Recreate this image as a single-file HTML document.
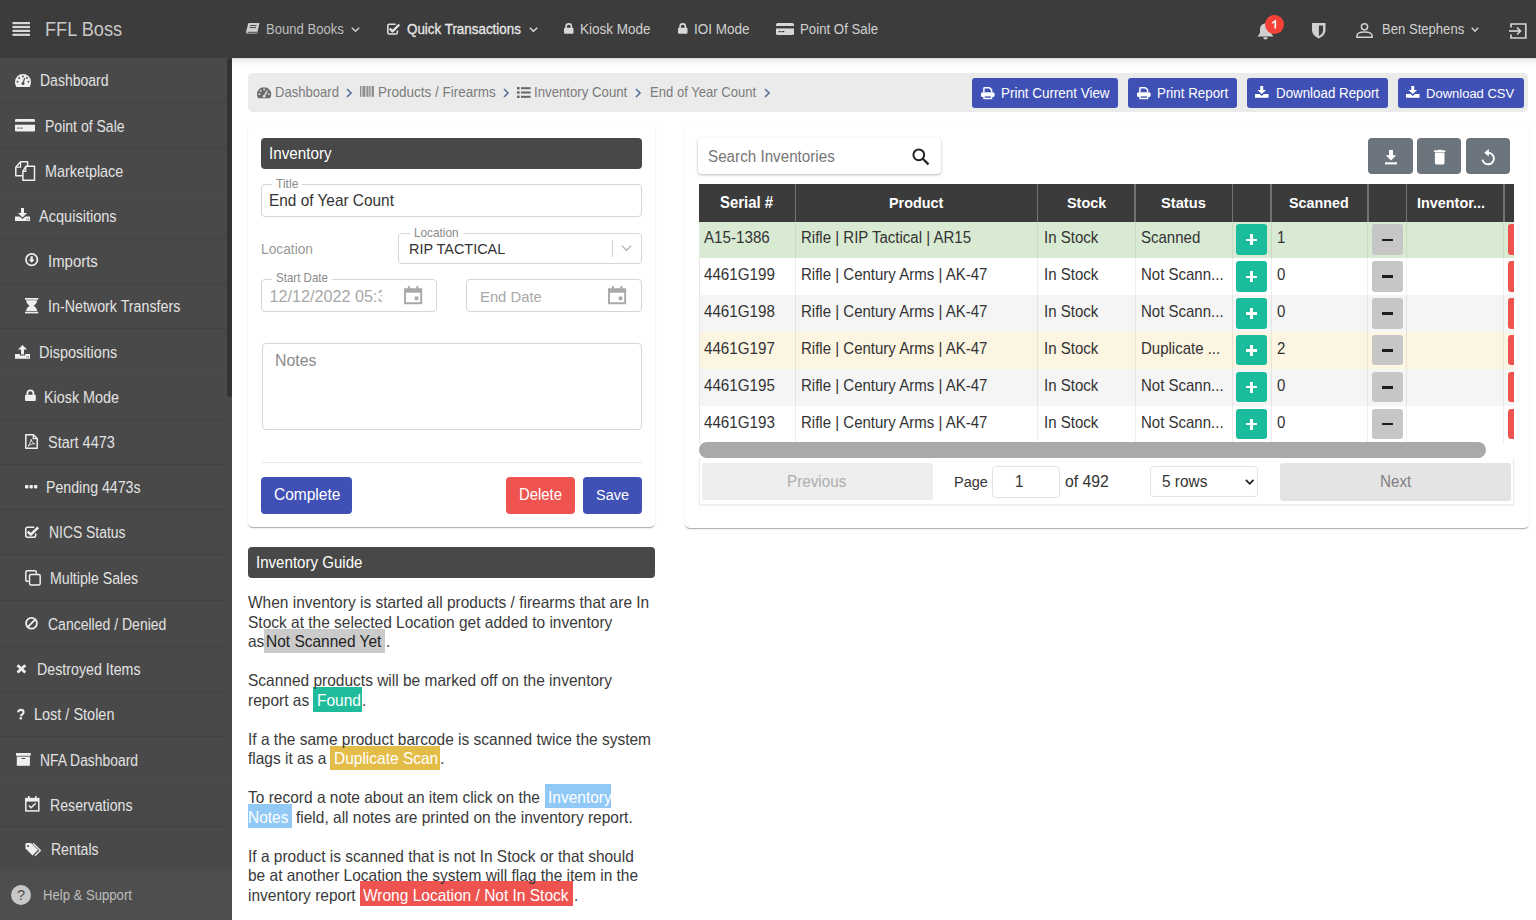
<!DOCTYPE html>
<html><head><meta charset="utf-8">
<style>
*{box-sizing:border-box;margin:0;padding:0}
html,body{width:1536px;height:920px;overflow:hidden;background:#fff;font-family:"Liberation Sans",sans-serif;position:relative}
.a{position:absolute;white-space:nowrap}
svg{display:block;position:absolute;overflow:visible}
</style></head><body>
<div class="a" style="left:0px;top:0px;width:1536.00px;height:58.00px;background:#3c3c3c"></div>
<svg style="left:12px;top:22px;" width="19" height="14" viewBox="0 0 19 14"><rect x="0.5" y="0" width="17.5" height="2.2" fill="#d8d8d8"/><rect x="0.5" y="3.9" width="17.5" height="2.2" fill="#d8d8d8"/><rect x="0.5" y="7.8" width="17.5" height="2.2" fill="#d8d8d8"/><rect x="0.5" y="11.7" width="17.5" height="2.2" fill="#d8d8d8"/></svg>
<div class="a" style="left:45.0px;top:19px;font-size:20.38px;line-height:20.38px;color:#c9c9c9;font-weight:normal;transform:scaleX(0.8929);transform-origin:0 0;">FFL Boss</div>
<svg style="left:246px;top:23px;" width="14" height="12" viewBox="0 0 14 12"><path d="M3 0h10.5l-2.3 10.5H1.2q-1.2 0-1.2-1.2L2 1.2Q2.3 0 3 0z" fill="#cfcfcf"/><path d="M1.5 9.3h9.6" stroke="#3c3c3c" stroke-width="0.9"/><path d="M4 2.6h6.5M3.5 4.6h6.5" stroke="#3c3c3c" stroke-width="0.9"/></svg>
<div class="a" style="left:265.5px;top:22px;font-size:14.67px;line-height:14.67px;color:#bdbdbd;font-weight:normal;transform:scaleX(0.8929);transform-origin:0 0;">Bound Books</div>
<svg style="left:351px;top:27px;" width="9" height="5" viewBox="0 0 9 5"><path d="M0.8 0.8L4.5 4.2L8.2 0.8" fill="none" stroke="#d2d2d2" stroke-width="1.4"/></svg>
<svg style="left:387px;top:23px;" width="13" height="12" viewBox="0 0 13 12"><path d="M8.6 1.3H2.2A1.4 1.4 0 0 0 0.8 2.7V9.6A1.4 1.4 0 0 0 2.2 11H9A1.4 1.4 0 0 0 10.4 9.6V7.4" fill="none" stroke="#e4e4e4" stroke-width="1.5"/><path d="M2.7 5.5l2.8 2.8 6.8-6.8" fill="none" stroke="#e4e4e4" stroke-width="2.4" stroke-linejoin="round"/></svg>
<div class="a" style="left:406.5px;top:21px;font-size:15.01px;line-height:15.01px;color:#e8e8e8;font-weight:normal;transform:scaleX(0.8929);transform-origin:0 0;-webkit-text-stroke:0.3px #e8e8e8;">Quick Transactions</div>
<svg style="left:528.5px;top:27px;" width="9" height="5" viewBox="0 0 9 5"><path d="M0.8 0.8L4.5 4.2L8.2 0.8" fill="none" stroke="#e0e0e0" stroke-width="1.4"/></svg>
<svg style="left:564px;top:23px;" width="9.5" height="11" viewBox="0 0 10 11"><path d="M2.2 5V3.4a2.8 2.8 0 0 1 5.6 0V5" fill="none" stroke="#d8d8d8" stroke-width="1.7"/><rect x="0" y="4.8" width="10" height="6.2" rx="1" fill="#d8d8d8"/></svg>
<div class="a" style="left:580.0px;top:21px;font-size:15.12px;line-height:15.12px;color:#d2d2d2;font-weight:normal;transform:scaleX(0.8929);transform-origin:0 0;">Kiosk Mode</div>
<svg style="left:678px;top:23px;" width="9.5" height="11" viewBox="0 0 10 11"><path d="M2.2 5V3.4a2.8 2.8 0 0 1 5.6 0V5" fill="none" stroke="#d8d8d8" stroke-width="1.7"/><rect x="0" y="4.8" width="10" height="6.2" rx="1" fill="#d8d8d8"/></svg>
<div class="a" style="left:694.0px;top:21px;font-size:15.12px;line-height:15.12px;color:#d2d2d2;font-weight:normal;transform:scaleX(0.8929);transform-origin:0 0;">IOI Mode</div>
<svg style="left:775.5px;top:22.5px;" width="18" height="12" viewBox="0 0 18 12"><rect x="0" y="0" width="18" height="12" rx="1.6" fill="#d8d8d8"/><rect x="0" y="3" width="18" height="2.4" fill="#3c3c3c"/><rect x="2.5" y="8" width="2.2" height="1.2" fill="#3c3c3c"/><rect x="5.5" y="8" width="2.8" height="1.2" fill="#3c3c3c"/></svg>
<div class="a" style="left:800.0px;top:22px;font-size:14.84px;line-height:14.84px;color:#d2d2d2;font-weight:normal;transform:scaleX(0.8929);transform-origin:0 0;">Point Of Sale</div>
<svg style="left:1256px;top:23px;" width="19" height="17" viewBox="0 0 19 17"><path d="M9.5 0.5c3.6 0 5.5 2.6 5.5 6v3.5l2.5 3.4H1.5L4 10V6.5c0-3.4 1.9-6 5.5-6z" fill="#cfcfcf"/><path d="M7.3 14.2a2.2 2.2 0 0 0 4.4 0z" fill="#cfcfcf"/></svg>
<div class="a" style="left:1265px;top:15px;width:19px;height:19px;border-radius:50%;background:#f44336"></div>
<svg style="left:1271px;top:20px;" width="6" height="9" viewBox="1271 20 6 9"><path d="M1271.9 22.4L1275 20.3H1276.1V28.6H1274.5V22.4L1271.9 23.8Z" fill="#fff"/></svg>
<svg style="left:1312.2px;top:22.6px;" width="13.5" height="15.4" viewBox="0 0 13.5 15.4"><path d="M0 0H13.5V7C13.5 11 10.2 13.9 6.75 15.4C3.3 13.9 0 11 0 7Z" fill="#d0d0d0"/><path d="M6.9 2.4H11.1V7C11.1 9.9 9.2 11.8 6.9 13Z" fill="#3c3c3c"/></svg>
<svg style="left:1356px;top:23px;" width="17" height="15" viewBox="0 0 17 15"><circle cx="8.5" cy="3.8" r="3.1" fill="none" stroke="#d2d2d2" stroke-width="1.5"/><path d="M0.9 14.2v-1.2c0-2.6 3.6-4 7.6-4s7.6 1.4 7.6 4v1.2z" fill="none" stroke="#d2d2d2" stroke-width="1.5"/></svg>
<div class="a" style="left:1381.5px;top:22px;font-size:14.67px;line-height:14.67px;color:#d2d2d2;font-weight:normal;transform:scaleX(0.8929);transform-origin:0 0;">Ben Stephens</div>
<svg style="left:1471px;top:27px;" width="8" height="5" viewBox="0 0 8 5"><path d="M0.8 0.8L4.0 4.2L7.2 0.8" fill="none" stroke="#d2d2d2" stroke-width="1.4"/></svg>
<svg style="left:1509px;top:21.5px;" width="18" height="18" viewBox="0 0 18 18"><path d="M2 5.5V2h14.8v14H2v-3.5" fill="none" stroke="#d2d2d2" stroke-width="1.7"/><path d="M0 9h11" stroke="#d2d2d2" stroke-width="1.7"/><path d="M8 5.5L11.5 9 8 12.5" fill="none" stroke="#d2d2d2" stroke-width="1.7"/></svg>
<div class="a" style="left:0px;top:58px;width:232.00px;height:862.00px;background:#494949"></div>
<div class="a" style="left:0px;top:102px;width:227.00px;height:1.00px;background:#414141"></div>
<div class="a" style="left:40.4px;top:72px;font-size:16.12px;line-height:16.12px;color:#e2e2e2;font-weight:normal;transform:scaleX(0.8696);transform-origin:0 0;">Dashboard</div>
<div class="a" style="left:0px;top:148px;width:227.00px;height:1.00px;background:#414141"></div>
<div class="a" style="left:44.6px;top:118px;font-size:16.15px;line-height:16.15px;color:#e2e2e2;font-weight:normal;transform:scaleX(0.8696);transform-origin:0 0;">Point of Sale</div>
<div class="a" style="left:0px;top:192px;width:227.00px;height:1.00px;background:#4c4c4c"></div>
<div class="a" style="left:45.0px;top:164px;font-size:16.54px;line-height:16.54px;color:#e2e2e2;font-weight:normal;transform:scaleX(0.8696);transform-origin:0 0;">Marketplace</div>
<div class="a" style="left:0px;top:238px;width:227.00px;height:1.00px;background:#414141"></div>
<div class="a" style="left:39.1px;top:209px;font-size:16.74px;line-height:16.74px;color:#e2e2e2;font-weight:normal;transform:scaleX(0.8696);transform-origin:0 0;">Acquisitions</div>
<div class="a" style="left:0px;top:283px;width:227.00px;height:1.00px;background:#414141"></div>
<div class="a" style="left:48.0px;top:253px;font-size:17.18px;line-height:17.18px;color:#e2e2e2;font-weight:normal;transform:scaleX(0.8696);transform-origin:0 0;">Imports</div>
<div class="a" style="left:0px;top:328px;width:227.00px;height:1.00px;background:#414141"></div>
<div class="a" style="left:48.0px;top:298px;font-size:16.42px;line-height:16.42px;color:#e2e2e2;font-weight:normal;transform:scaleX(0.8696);transform-origin:0 0;">In-Network Transfers</div>
<div class="a" style="left:0px;top:374px;width:227.00px;height:1.00px;background:#4c4c4c"></div>
<div class="a" style="left:39.1px;top:345px;font-size:16.7px;line-height:16.7px;color:#e2e2e2;font-weight:normal;transform:scaleX(0.8696);transform-origin:0 0;">Dispositions</div>
<div class="a" style="left:0px;top:419px;width:227.00px;height:1.00px;background:#414141"></div>
<div class="a" style="left:44.4px;top:390px;font-size:16.53px;line-height:16.53px;color:#e2e2e2;font-weight:normal;transform:scaleX(0.8696);transform-origin:0 0;">Kiosk Mode</div>
<div class="a" style="left:0px;top:464px;width:227.00px;height:1.00px;background:#414141"></div>
<div class="a" style="left:47.5px;top:435px;font-size:16.65px;line-height:16.65px;color:#e2e2e2;font-weight:normal;transform:scaleX(0.8696);transform-origin:0 0;">Start 4473</div>
<div class="a" style="left:0px;top:509px;width:227.00px;height:1.00px;background:#414141"></div>
<div class="a" style="left:46.4px;top:479px;font-size:16.31px;line-height:16.31px;color:#e2e2e2;font-weight:normal;transform:scaleX(0.8696);transform-origin:0 0;">Pending 4473s</div>
<div class="a" style="left:0px;top:554px;width:227.00px;height:1.00px;background:#414141"></div>
<div class="a" style="left:48.8px;top:525px;font-size:15.97px;line-height:15.97px;color:#e2e2e2;font-weight:normal;transform:scaleX(0.8696);transform-origin:0 0;">NICS Status</div>
<div class="a" style="left:0px;top:600px;width:227.00px;height:1.00px;background:#414141"></div>
<div class="a" style="left:49.6px;top:570px;font-size:16.3px;line-height:16.3px;color:#e2e2e2;font-weight:normal;transform:scaleX(0.8696);transform-origin:0 0;">Multiple Sales</div>
<div class="a" style="left:0px;top:646px;width:227.00px;height:1.00px;background:#414141"></div>
<div class="a" style="left:47.7px;top:616px;font-size:16.12px;line-height:16.12px;color:#e2e2e2;font-weight:normal;transform:scaleX(0.8696);transform-origin:0 0;">Cancelled / Denied</div>
<div class="a" style="left:0px;top:692px;width:227.00px;height:1.00px;background:#414141"></div>
<div class="a" style="left:37.3px;top:661px;font-size:16.38px;line-height:16.38px;color:#e2e2e2;font-weight:normal;transform:scaleX(0.8696);transform-origin:0 0;">Destroyed Items</div>
<div class="a" style="left:0px;top:736px;width:227.00px;height:1.00px;background:#414141"></div>
<div class="a" style="left:33.8px;top:707px;font-size:16.65px;line-height:16.65px;color:#e2e2e2;font-weight:normal;transform:scaleX(0.8696);transform-origin:0 0;">Lost / Stolen</div>
<div class="a" style="left:0px;top:782px;width:227.00px;height:1.00px;background:#4c4c4c"></div>
<div class="a" style="left:40.0px;top:753px;font-size:15.97px;line-height:15.97px;color:#e2e2e2;font-weight:normal;transform:scaleX(0.8696);transform-origin:0 0;">NFA Dashboard</div>
<div class="a" style="left:0px;top:826px;width:227.00px;height:1.00px;background:#414141"></div>
<div class="a" style="left:49.5px;top:797px;font-size:16.26px;line-height:16.26px;color:#e2e2e2;font-weight:normal;transform:scaleX(0.8696);transform-origin:0 0;">Reservations</div>
<div class="a" style="left:50.8px;top:841px;font-size:16.11px;line-height:16.11px;color:#e2e2e2;font-weight:normal;transform:scaleX(0.8696);transform-origin:0 0;">Rentals</div>
<div class="a" style="left:227px;top:58px;width:5.00px;height:338.50px;background:#333;border-radius:3px"></div>
<svg style="left:15px;top:74px;" width="16" height="13" viewBox="0 0 16 13"><path d="M8 0A8 8 0 0 0 0 8c0 1.9 0.7 3.6 1.4 5h13.2c0.7-1.4 1.4-3.1 1.4-5A8 8 0 0 0 8 0z" fill="#efefef"/><circle cx="8" cy="2.4" r="0.95" fill="#494949"/><circle cx="4.1" cy="4" r="0.95" fill="#494949"/><circle cx="2.5" cy="7.8" r="0.95" fill="#494949"/><circle cx="13.5" cy="7.8" r="0.95" fill="#494949"/><circle cx="11.9" cy="4" r="0.95" fill="#494949"/><path d="M9.6 4.2L8.2 9" stroke="#494949" stroke-width="1.2"/><circle cx="8" cy="9.6" r="1.5" fill="#494949"/></svg>
<svg style="left:15px;top:119.2px;" width="20" height="12.6" viewBox="0 0 20 12.6"><rect x="0" y="0" width="20" height="12.6" rx="1.3" fill="#efefef"/><rect x="0" y="2.8" width="20" height="2.9" fill="#494949"/><rect x="2.4" y="8.6" width="1.8" height="1" fill="#494949"/><rect x="5" y="8.6" width="2.6" height="1" fill="#494949"/></svg>
<svg style="left:15px;top:161px;" width="21" height="20" viewBox="15 161 21 20"><path d="M27.6 166.3V161.8H20.6L15.8 167.2V175.8H22.6" fill="none" stroke="#efefef" stroke-width="1.5" stroke-linejoin="round"/><path d="M20.6 162.2V167.2H16.2" fill="none" stroke="#efefef" stroke-width="1.2"/><path d="M25.8 166.3H34.5V180.2H22.9V171.4Z" fill="none" stroke="#efefef" stroke-width="1.5" stroke-linejoin="round"/><path d="M25.8 166.6V171.4H23.2" fill="none" stroke="#efefef" stroke-width="1.2"/></svg>
<svg style="left:15.2px;top:208px;" width="15" height="13" viewBox="0 0 15 13"><path d="M6 0h3v5h3L7.5 9.4 3 5h3z" fill="#efefef"/><path d="M0 8.4h4.5l3 2.6 3-2.6H15V13H0z" fill="#efefef"/><rect x="11.3" y="10.7" width="1" height="1" fill="#494949"/><rect x="13" y="10.7" width="1" height="1" fill="#494949"/></svg>
<svg style="left:24.9px;top:253.1px;" width="13.4" height="13.4" viewBox="0 0 14 14"><circle cx="7" cy="7" r="6" fill="none" stroke="#efefef" stroke-width="1.8"/><path d="M5.8 3.3h2.4v3.4h2.1L7 10.2 3.7 6.7h2.1z" fill="#efefef"/></svg>
<svg style="left:24.9px;top:297.6px;" width="13.3" height="15.4" viewBox="0 0 13.3 15.4"><rect x="0" y="0" width="13.3" height="1.7" fill="#efefef"/><rect x="0" y="13.7" width="13.3" height="1.7" fill="#efefef"/><path d="M1.2 2.3h10.9c0 3-1.8 4.2-3.4 5.4 1.6 1.2 3.4 2.4 3.4 5.4H1.2c0-3 1.8-4.2 3.4-5.4C3 6.5 1.2 5.3 1.2 2.3z" fill="#efefef"/></svg>
<svg style="left:15px;top:344.8px;" width="15" height="13.7" viewBox="0 0 15 13.7"><path d="M7.5 0l4.5 4.4H9v5H6v-5H3z" fill="#efefef"/><path d="M0 9h4.8v1.4h5.4V9H15v4.7H0z" fill="#efefef"/><rect x="11.3" y="11.4" width="1" height="1" fill="#494949"/><rect x="13" y="11.4" width="1" height="1" fill="#494949"/></svg>
<svg style="left:24.6px;top:389.8px;" width="10.8" height="11" viewBox="0 0 10.8 11"><path d="M2.4 5V3.3a3 3 0 0 1 6 0V5" fill="none" stroke="#efefef" stroke-width="1.8"/><rect x="0" y="4.8" width="10.8" height="6.2" rx="1" fill="#efefef"/></svg>
<svg style="left:25px;top:434px;" width="13" height="15" viewBox="0 0 13 15"><path d="M0.8 0.8h7.6l3.8 3.8v9.6H0.8z" fill="none" stroke="#efefef" stroke-width="1.5" stroke-linejoin="round"/><path d="M8.3 0.8v3.9h3.9" fill="none" stroke="#efefef" stroke-width="1.3"/><path d="M3 12.3c1.5-2 2.7-4.4 3.2-7 0.5 2.4 1.6 3.9 3.6 4.5-2-0.3-4.5 0.3-6.8 2.5z" fill="none" stroke="#efefef" stroke-width="0.9"/></svg>
<svg style="left:25px;top:485px;" width="12.4" height="3.4" viewBox="0 0 12.4 3.4"><rect x="0" y="0" width="3.4" height="3.4" rx="0.8" fill="#efefef"/><rect x="4.5" y="0" width="3.4" height="3.4" rx="0.8" fill="#efefef"/><rect x="9" y="0" width="3.4" height="3.4" rx="0.8" fill="#efefef"/></svg>
<svg style="left:24.7px;top:526px;" width="14.3" height="12" viewBox="0 0 14.3 12"><path d="M9.3 1.3H2.3A1.5 1.5 0 0 0 0.8 2.8V9.7A1.5 1.5 0 0 0 2.3 11.2H9.2A1.5 1.5 0 0 0 10.7 9.7V7.5" fill="none" stroke="#efefef" stroke-width="1.6"/><path d="M2.8 5.6l3 3 7.4-7.3" fill="none" stroke="#efefef" stroke-width="2.6" stroke-linejoin="round"/></svg>
<svg style="left:24.7px;top:569.7px;" width="16" height="15.7" viewBox="0 0 16 15.7"><path d="M3.7 11.3H2.1A1.3 1.3 0 0 1 0.8 10V2.1A1.3 1.3 0 0 1 2.1 0.8H10a1.3 1.3 0 0 1 1.3 1.3v1.6" fill="none" stroke="#efefef" stroke-width="1.5"/><rect x="4.5" y="4.5" width="10.7" height="10.4" rx="1.3" fill="none" stroke="#efefef" stroke-width="1.5"/></svg>
<svg style="left:25px;top:617.4px;" width="13" height="12.5" viewBox="0 0 13 12.5"><circle cx="6.5" cy="6.25" r="5.4" fill="none" stroke="#efefef" stroke-width="1.8"/><path d="M2.7 10.1L10.3 2.4" stroke="#efefef" stroke-width="1.8"/></svg>
<svg style="left:15.9px;top:664.3px;" width="10.8" height="9.8" viewBox="0 0 10.8 9.8"><path d="M1.5 1.3l7.8 7.2M9.3 1.3L1.5 8.5" stroke="#efefef" stroke-width="2.8"/></svg>
<svg style="left:16.5px;top:709.3px;" width="7.6" height="10.4" viewBox="0 0 7.6 10.4"><path d="M1.2 3.3C1.2 1.8 2.3 0.9 3.8 0.9s2.8 0.9 2.8 2.4c0 2-2.7 2-2.7 4" fill="none" stroke="#efefef" stroke-width="2.1"/><rect x="2.6" y="8.2" width="2.5" height="2.2" fill="#efefef"/></svg>
<svg style="left:15.5px;top:753px;" width="14.7" height="12.8" viewBox="0 0 14.7 12.8"><rect x="0" y="0" width="14.7" height="2.8" fill="#efefef"/><rect x="0.8" y="3.6" width="13.1" height="9.2" fill="#efefef"/><rect x="5.6" y="5" width="3.5" height="1" fill="#494949"/></svg>
<svg style="left:24.7px;top:796px;" width="14.6" height="15.7" viewBox="0 0 14.6 15.7"><rect x="0.8" y="2.6" width="13" height="12.3" fill="none" stroke="#efefef" stroke-width="1.5"/><rect x="0.8" y="2.6" width="13" height="3" fill="#efefef"/><rect x="3" y="0" width="1.6" height="3.5" fill="#efefef"/><rect x="10" y="0" width="1.6" height="3.5" fill="#efefef"/><path d="M3.9 9.5l2.2 2.2 4.6-4.4" fill="none" stroke="#efefef" stroke-width="1.5"/></svg>
<svg style="left:24.7px;top:843px;" width="16.6" height="13" viewBox="0 0 16.6 13"><path d="M0.5 1.3v4.3l7 7 5.5-5.5-7-7H1.3z" fill="#efefef"/><circle cx="3" cy="2.9" r="1" fill="#494949"/><path d="M8 0.3l7.4 7.2-5.4 5.3" fill="none" stroke="#efefef" stroke-width="1.3"/></svg>
<div class="a" style="left:0px;top:868.5px;width:232.00px;height:51.50px;background:#4e4e4e"></div>
<div class="a" style="left:11.3px;top:885px;width:20px;height:20px;border-radius:50%;background:#c8c8c8"></div>
<div class="a" style="left:16.8px;top:887px;font-size:15.23px;line-height:15.23px;color:#4e4e4e;font-weight:normal;transform:scaleX(0.9524);transform-origin:0 0;">?</div>
<div class="a" style="left:43.0px;top:889px;font-size:13.78px;line-height:13.78px;color:#bdbdbd;font-weight:normal;transform:scaleX(0.9524);transform-origin:0 0;">Help &amp; Support</div>
<div class="a" style="left:232px;top:58px;width:1304.00px;height:12.00px;background:linear-gradient(#d4d4d4 0px,#e6e6e6 1px,#eeeeee 2px,#f3f3f3 3px,#f7f7f7 4.5px,#fafafa 6px,#fdfdfd 9px,#ffffff 12px)"></div>
<div class="a" style="left:248px;top:73px;width:1280.40px;height:39.00px;background:#ebebeb;border-radius:5px"></div>
<div class="a" style="left:274.6px;top:86px;font-size:13.73px;line-height:13.73px;color:#7b7b7b;font-weight:normal;transform:scaleX(0.9524);transform-origin:0 0;">Dashboard</div>
<div class="a" style="left:377.7px;top:85px;font-size:14.18px;line-height:14.18px;color:#7b7b7b;font-weight:normal;transform:scaleX(0.9524);transform-origin:0 0;">Products / Firearms</div>
<div class="a" style="left:534.4px;top:86px;font-size:13.89px;line-height:13.89px;color:#7b7b7b;font-weight:normal;transform:scaleX(0.9524);transform-origin:0 0;">Inventory Count</div>
<div class="a" style="left:650.2px;top:86px;font-size:13.72px;line-height:13.72px;color:#7b7b7b;font-weight:normal;transform:scaleX(0.9524);transform-origin:0 0;">End of Year Count</div>
<svg style="left:346px;top:88px;" width="6" height="10" viewBox="0 0 6 10"><path d="M1 1l4 4-4 4" fill="none" stroke="#55719a" stroke-width="1.6"/></svg>
<svg style="left:503.3px;top:88px;" width="6" height="10" viewBox="0 0 6 10"><path d="M1 1l4 4-4 4" fill="none" stroke="#55719a" stroke-width="1.6"/></svg>
<svg style="left:635px;top:88px;" width="6" height="10" viewBox="0 0 6 10"><path d="M1 1l4 4-4 4" fill="none" stroke="#55719a" stroke-width="1.6"/></svg>
<svg style="left:764px;top:88px;" width="6" height="10" viewBox="0 0 6 10"><path d="M1 1l4 4-4 4" fill="none" stroke="#55719a" stroke-width="1.6"/></svg>
<svg style="left:256.6px;top:86.9px;" width="14.2" height="11.3" viewBox="0 0 14 11"><path d="M7 0a7 7 0 0 0-7 7c0 1.6 0.5 3 1.4 4h11.2c0.9-1 1.4-2.4 1.4-4a7 7 0 0 0-7-7z" fill="#6a6a6a"/><circle cx="7" cy="2.3" r="0.9" fill="#ebebeb"/><circle cx="3.6" cy="3.8" r="0.9" fill="#ebebeb"/><circle cx="2.3" cy="7" r="0.9" fill="#ebebeb"/><circle cx="11.7" cy="7" r="0.9" fill="#ebebeb"/><path d="M10.2 3.3L7.6 8.2" stroke="#ebebeb" stroke-width="1.2"/><circle cx="7" cy="9" r="1.3" fill="#ebebeb"/></svg>
<svg style="left:360px;top:86.2px;" width="14" height="10.8" viewBox="0 0 14 10.8"><rect x="0" y="0" width="1.2" height="10.8" fill="#8f8f8f"/><rect x="1.8" y="0" width="0.8" height="10.8" fill="#8f8f8f"/><rect x="3" y="0" width="2" height="10.8" fill="#8f8f8f"/><rect x="5.6" y="0" width="1" height="10.8" fill="#8f8f8f"/><rect x="7" y="0" width="1.5" height="10.8" fill="#8f8f8f"/><rect x="9" y="0" width="0.8" height="10.8" fill="#8f8f8f"/><rect x="10.4" y="0" width="0.6" height="10.8" fill="#8f8f8f"/><rect x="11.6" y="0" width="2.4" height="10.8" fill="#8f8f8f"/></svg>
<svg style="left:517px;top:87px;" width="13.6" height="11" viewBox="0 0 13.6 11"><rect x="0" y="0" width="2.6" height="2.4" fill="#666"/><rect x="0" y="4.3" width="2.6" height="2.4" fill="#666"/><rect x="0" y="8.6" width="2.6" height="2.4" fill="#666"/><rect x="4" y="0.2" width="9.6" height="2" fill="#666"/><rect x="4" y="4.5" width="9.6" height="2" fill="#666"/><rect x="4" y="8.8" width="9.6" height="2" fill="#666"/></svg>
<div class="a" style="left:972.3px;top:77.5px;width:146.20px;height:30.50px;background:#3f51b5;border-radius:3px"></div>
<div class="a" style="left:1001.1px;top:86px;font-size:14.08px;line-height:14.08px;color:#fff;font-weight:normal;transform:scaleX(0.9524);transform-origin:0 0;">Print Current View</div>
<svg style="left:981.1999999999999px;top:86.8px;" width="13.6" height="12.2" viewBox="0 0 13.6 12.2"><path d="M2.9 5V1.5Q2.9 0.75 3.65 0.75H8.4L10.6 2.9V5" fill="none" stroke="#fff" stroke-width="1.5"/><rect x="0" y="5.2" width="13.6" height="4.9" rx="1.6" fill="#fff"/><rect x="3" y="8.7" width="7.6" height="2.8" fill="#3f51b5" stroke="#fff" stroke-width="1.4"/></svg>
<div class="a" style="left:1128px;top:77.5px;width:109.00px;height:30.50px;background:#3f51b5;border-radius:3px"></div>
<div class="a" style="left:1156.7px;top:86px;font-size:14.03px;line-height:14.03px;color:#fff;font-weight:normal;transform:scaleX(0.9524);transform-origin:0 0;">Print Report</div>
<svg style="left:1136.9px;top:86.8px;" width="13.6" height="12.2" viewBox="0 0 13.6 12.2"><path d="M2.9 5V1.5Q2.9 0.75 3.65 0.75H8.4L10.6 2.9V5" fill="none" stroke="#fff" stroke-width="1.5"/><rect x="0" y="5.2" width="13.6" height="4.9" rx="1.6" fill="#fff"/><rect x="3" y="8.7" width="7.6" height="2.8" fill="#3f51b5" stroke="#fff" stroke-width="1.4"/></svg>
<div class="a" style="left:1247.1px;top:77.5px;width:140.70px;height:30.50px;background:#3f51b5;border-radius:3px"></div>
<div class="a" style="left:1275.6px;top:86px;font-size:14.01px;line-height:14.01px;color:#fff;font-weight:normal;transform:scaleX(0.9524);transform-origin:0 0;">Download Report</div>
<svg style="left:1255.1999999999998px;top:86px;" width="13.5" height="12" viewBox="0 0 13.5 12"><path d="M5.3 0h2.9v3.9h2.9L6.75 8 2.4 3.9h2.9z" fill="#fff"/><path d="M0 8h4.6l2.15 1.9L8.9 8h4.6v3.7H0z" fill="#fff"/></svg>
<div class="a" style="left:1397.6px;top:77.5px;width:126.00px;height:30.50px;background:#3f51b5;border-radius:3px"></div>
<div class="a" style="left:1426.3px;top:87px;font-size:13.67px;line-height:13.67px;color:#fff;font-weight:normal;transform:scaleX(0.9524);transform-origin:0 0;">Download CSV</div>
<svg style="left:1405.6999999999998px;top:86px;" width="13.5" height="12" viewBox="0 0 13.5 12"><path d="M5.3 0h2.9v3.9h2.9L6.75 8 2.4 3.9h2.9z" fill="#fff"/><path d="M0 8h4.6l2.15 1.9L8.9 8h4.6v3.7H0z" fill="#fff"/></svg>
<div class="a" style="left:248px;top:123.8px;width:407.30px;height:403.20px;background:#fff;border-radius:5px;box-shadow:0 2px 1px -1px rgba(0,0,0,.2),0 1px 1px 0 rgba(0,0,0,.1),0 1px 3px 0 rgba(0,0,0,.08)"></div>
<div class="a" style="left:261.3px;top:137.7px;width:380.40px;height:30.90px;background:#484848;border-radius:4px"></div>
<div class="a" style="left:269.3px;top:145px;font-size:16.03px;line-height:16.03px;color:#fff;font-weight:normal;transform:scaleX(0.9524);transform-origin:0 0;">Inventory</div>
<div class="a" style="left:261.3px;top:184.1px;width:380.40px;height:33.40px;border:1px solid #d6d6d6;border-radius:4px;background:#fff"></div>
<div class="a" style="left:271.6px;top:183.1px;width:30.40px;height:3.00px;background:#fff"></div>
<div class="a" style="left:275.6px;top:178px;font-size:12.69px;line-height:12.69px;color:#8a8a8a;font-weight:normal;transform:scaleX(0.9524);transform-origin:0 0;">Title</div>
<div class="a" style="left:269.3px;top:192px;font-size:16.16px;line-height:16.16px;color:#333;font-weight:normal;transform:scaleX(0.9524);transform-origin:0 0;">End of Year Count</div>
<div class="a" style="left:261.3px;top:242px;font-size:14.44px;line-height:14.44px;color:#9a9a9a;font-weight:normal;transform:scaleX(0.9524);transform-origin:0 0;">Location</div>
<div class="a" style="left:398.2px;top:233.4px;width:243.50px;height:30.20px;border:1px solid #d6d6d6;border-radius:4px;background:#fff"></div>
<div class="a" style="left:410.4px;top:232.4px;width:52.50px;height:3.00px;background:#fff"></div>
<div class="a" style="left:414.4px;top:227px;font-size:12.36px;line-height:12.36px;color:#8a8a8a;font-weight:normal;transform:scaleX(0.9524);transform-origin:0 0;">Location</div>
<div class="a" style="left:408.5px;top:241px;font-size:15.17px;line-height:15.17px;color:#333;font-weight:normal;transform:scaleX(0.9524);transform-origin:0 0;">RIP TACTICAL</div>
<div class="a" style="left:612.4px;top:240px;width:1.00px;height:17.00px;background:#d0d0d0"></div>
<svg style="left:621.3px;top:244.5px;" width="11" height="6" viewBox="0 0 11 6"><path d="M0.8 0.8L5.5 5.2 10.2 0.8" fill="none" stroke="#b8b8b8" stroke-width="1.5"/></svg>
<div class="a" style="left:261.3px;top:279px;width:175.70px;height:33.30px;border:1px solid #d6d6d6;border-radius:4px;background:#fff"></div>
<div class="a" style="left:271.6px;top:278px;width:60.00px;height:3.00px;background:#fff"></div>
<div class="a" style="left:275.6px;top:272px;font-size:12.13px;line-height:12.13px;color:#8a8a8a;font-weight:normal;transform:scaleX(0.9524);transform-origin:0 0;">Start Date</div>
<div class="a" style="left:269.4px;top:288px;width:113px;overflow:hidden;font-size:16.2px;line-height:16.2px;color:#a8a8a8">12/12/2022 05:30</div>
<svg style="left:403.8px;top:285.7px;" width="18.2" height="18.3" viewBox="0 0 18 18"><path d="M1 3.2h16v13.8H1z" fill="none" stroke="#a9a9a9" stroke-width="1.9"/><rect x="1" y="3" width="16" height="3.6" fill="#a9a9a9"/><rect x="3.8" y="0" width="2" height="4" fill="#a9a9a9"/><rect x="12.2" y="0" width="2" height="4" fill="#a9a9a9"/><rect x="10.6" y="10.4" width="3.6" height="3.6" fill="#a9a9a9"/></svg>
<div class="a" style="left:466.2px;top:279px;width:175.50px;height:33.30px;border:1px solid #d6d6d6;border-radius:4px;background:#fff"></div>
<div class="a" style="left:480.0px;top:289px;font-size:15.56px;line-height:15.56px;color:#a8a8a8;font-weight:normal;transform:scaleX(0.9524);transform-origin:0 0;">End Date</div>
<svg style="left:608.1px;top:285.7px;" width="18.2" height="18.3" viewBox="0 0 18 18"><path d="M1 3.2h16v13.8H1z" fill="none" stroke="#a9a9a9" stroke-width="1.9"/><rect x="1" y="3" width="16" height="3.6" fill="#a9a9a9"/><rect x="3.8" y="0" width="2" height="4" fill="#a9a9a9"/><rect x="12.2" y="0" width="2" height="4" fill="#a9a9a9"/><rect x="10.6" y="10.4" width="3.6" height="3.6" fill="#a9a9a9"/></svg>
<div class="a" style="left:261.5px;top:343.3px;width:380.20px;height:87.20px;border:1px solid #d6d6d6;border-radius:4px"></div>
<div class="a" style="left:274.7px;top:353px;font-size:16.72px;line-height:16.72px;color:#8a8a8a;font-weight:normal;transform:scaleX(0.9524);transform-origin:0 0;">Notes</div>
<div class="a" style="left:261.5px;top:461.7px;width:380.20px;height:1.00px;background:#e6e6e6"></div>
<div class="a" style="left:261.2px;top:476.9px;width:91.20px;height:36.70px;background:#3f51b5;border-radius:4px"></div>
<div class="a" style="left:273.9px;top:486px;font-size:16.29px;line-height:16.29px;color:#fff;font-weight:normal;transform:scaleX(0.9524);transform-origin:0 0;">Complete</div>
<div class="a" style="left:506.4px;top:476.9px;width:68.90px;height:36.70px;background:#ef5350;border-radius:4px"></div>
<div class="a" style="left:519.0px;top:487px;font-size:15.62px;line-height:15.62px;color:#fff;font-weight:normal;transform:scaleX(0.9524);transform-origin:0 0;">Delete</div>
<div class="a" style="left:582.7px;top:476.9px;width:59.00px;height:36.70px;background:#3f51b5;border-radius:4px"></div>
<div class="a" style="left:596.0px;top:487px;font-size:15.2px;line-height:15.2px;color:#fff;font-weight:normal;transform:scaleX(0.9524);transform-origin:0 0;">Save</div>
<div class="a" style="left:247.9px;top:547px;width:407.40px;height:30.70px;background:#484848;border-radius:4px"></div>
<div class="a" style="left:255.5px;top:555px;font-size:15.84px;line-height:15.84px;color:#fff;font-weight:normal;transform:scaleX(0.9524);transform-origin:0 0;">Inventory Guide</div>
<div class="a" style="left:263.8px;top:629px;width:121.20px;height:24.30px;background:#cbcbcb"></div>
<div class="a" style="left:313.3px;top:687.2px;width:48.50px;height:24.40px;background:#1fbc9c"></div>
<div class="a" style="left:330.4px;top:745.6px;width:109.20px;height:24.20px;background:#e4bd48"></div>
<div class="a" style="left:544.6px;top:784.4px;width:66.90px;height:23.80px;background:#90c8f6"></div>
<div class="a" style="left:247.8px;top:804px;width:44.00px;height:23.70px;background:#90c8f6"></div>
<div class="a" style="left:359.8px;top:881.2px;width:213.30px;height:24.40px;background:#ef5350"></div>
<div class="a" style="left:247.8px;top:594px;font-size:16.28px;line-height:16.28px;color:#3a3a3a;font-weight:normal;transform:scaleX(0.9524);transform-origin:0 0;">When inventory is started all products / firearms that are In</div>
<div class="a" style="left:247.8px;top:614px;font-size:16.28px;line-height:16.28px;color:#3a3a3a;font-weight:normal;transform:scaleX(0.9524);transform-origin:0 0;">Stock at the selected Location get added to inventory</div>
<div class="a" style="left:247.8px;top:633px;font-size:16.28px;line-height:16.28px;color:#3a3a3a;font-weight:normal;transform:scaleX(0.9524);transform-origin:0 0;">as</div>
<div class="a" style="left:265.5px;top:633px;font-size:16.28px;line-height:16.28px;color:#222;font-weight:normal;transform:scaleX(0.9524);transform-origin:0 0;">Not Scanned Yet</div>
<div class="a" style="left:385.5px;top:633px;font-size:16.28px;line-height:16.28px;color:#3a3a3a;font-weight:normal;transform:scaleX(0.9524);transform-origin:0 0;">.</div>
<div class="a" style="left:247.8px;top:672px;font-size:16.28px;line-height:16.28px;color:#3a3a3a;font-weight:normal;transform:scaleX(0.9524);transform-origin:0 0;">Scanned products will be marked off on the inventory</div>
<div class="a" style="left:247.8px;top:692px;font-size:16.28px;line-height:16.28px;color:#3a3a3a;font-weight:normal;transform:scaleX(0.9524);transform-origin:0 0;">report as</div>
<div class="a" style="left:316.5px;top:692px;font-size:16.28px;line-height:16.28px;color:#fff;font-weight:normal;transform:scaleX(0.9524);transform-origin:0 0;">Found</div>
<div class="a" style="left:362.0px;top:692px;font-size:16.28px;line-height:16.28px;color:#3a3a3a;font-weight:normal;transform:scaleX(0.9524);transform-origin:0 0;">.</div>
<div class="a" style="left:247.8px;top:731px;font-size:16.28px;line-height:16.28px;color:#3a3a3a;font-weight:normal;transform:scaleX(0.9524);transform-origin:0 0;">If a the same product barcode is scanned twice the system</div>
<div class="a" style="left:247.8px;top:750px;font-size:16.28px;line-height:16.28px;color:#3a3a3a;font-weight:normal;transform:scaleX(0.9524);transform-origin:0 0;">flags it as a</div>
<div class="a" style="left:333.5px;top:750px;font-size:16.28px;line-height:16.28px;color:#fff;font-weight:normal;transform:scaleX(0.9524);transform-origin:0 0;">Duplicate Scan</div>
<div class="a" style="left:440.0px;top:750px;font-size:16.28px;line-height:16.28px;color:#3a3a3a;font-weight:normal;transform:scaleX(0.9524);transform-origin:0 0;">.</div>
<div class="a" style="left:247.8px;top:789px;font-size:16.28px;line-height:16.28px;color:#3a3a3a;font-weight:normal;transform:scaleX(0.9524);transform-origin:0 0;">To record a note about an item click on the</div>
<div class="a" style="left:548.0px;top:789px;font-size:16.28px;line-height:16.28px;color:#fff;font-weight:normal;transform:scaleX(0.9524);transform-origin:0 0;">Inventory</div>
<div class="a" style="left:248.0px;top:809px;font-size:16.28px;line-height:16.28px;color:#fff;font-weight:normal;transform:scaleX(0.9524);transform-origin:0 0;">Notes</div>
<div class="a" style="left:296.0px;top:809px;font-size:16.28px;line-height:16.28px;color:#3a3a3a;font-weight:normal;transform:scaleX(0.9524);transform-origin:0 0;">field, all notes are printed on the inventory report.</div>
<div class="a" style="left:247.8px;top:848px;font-size:16.28px;line-height:16.28px;color:#3a3a3a;font-weight:normal;transform:scaleX(0.9524);transform-origin:0 0;">If a product is scanned that is not In Stock or that should</div>
<div class="a" style="left:247.8px;top:867px;font-size:16.28px;line-height:16.28px;color:#3a3a3a;font-weight:normal;transform:scaleX(0.9524);transform-origin:0 0;">be at another Location the system will flag the item in the</div>
<div class="a" style="left:247.8px;top:887px;font-size:16.28px;line-height:16.28px;color:#3a3a3a;font-weight:normal;transform:scaleX(0.9524);transform-origin:0 0;">inventory report</div>
<div class="a" style="left:362.5px;top:887px;font-size:16.28px;line-height:16.28px;color:#fff;font-weight:normal;transform:scaleX(0.9524);transform-origin:0 0;">Wrong Location / Not In Stock</div>
<div class="a" style="left:574.0px;top:887px;font-size:16.28px;line-height:16.28px;color:#3a3a3a;font-weight:normal;transform:scaleX(0.9524);transform-origin:0 0;">.</div>
<div class="a" style="left:684.8px;top:123.8px;width:843.80px;height:404.00px;background:#fff;border-radius:5px;box-shadow:0 2px 1px -1px rgba(0,0,0,.2),0 1px 1px 0 rgba(0,0,0,.1),0 1px 3px 0 rgba(0,0,0,.08)"></div>
<div class="a" style="left:697.8px;top:137.8px;width:243.50px;height:36.60px;background:#fff;border-radius:4px;box-shadow:0 1px 3px rgba(0,0,0,0.28)"></div>
<div class="a" style="left:707.8px;top:149px;font-size:15.98px;line-height:15.98px;color:#777;font-weight:normal;transform:scaleX(0.9524);transform-origin:0 0;">Search Inventories</div>
<svg style="left:912px;top:148px;" width="18" height="17" viewBox="0 0 18 17"><circle cx="6.8" cy="6.8" r="5.4" fill="none" stroke="#222" stroke-width="2"/><path d="M10.8 10.8L16.5 16.4" stroke="#222" stroke-width="2.2"/></svg>
<div class="a" style="left:1368.2px;top:137.6px;width:44.60px;height:36.90px;background:#6c757d;border-radius:4px"></div>
<div class="a" style="left:1417px;top:137.6px;width:44.30px;height:36.90px;background:#6c757d;border-radius:4px"></div>
<div class="a" style="left:1465.6px;top:137.6px;width:44.60px;height:36.90px;background:#6c757d;border-radius:4px"></div>
<svg style="left:1385px;top:149.6px;" width="12" height="14.4" viewBox="0 0 12 14.4"><path d="M4 0h4v5.2h3.3L6 10.5 0.7 5.2H4z" fill="#fff"/><rect x="0" y="12.3" width="12" height="2.1" fill="#fff"/></svg>
<svg style="left:1433.8px;top:150.3px;" width="11.4" height="14.4" viewBox="0 0 11.4 14.4"><rect x="0" y="0.3" width="11.4" height="1.8" rx="0.6" fill="#fff"/><rect x="3.8" y="-0.2" width="3.8" height="1.5" fill="#fff"/><path d="M0.9 2.5h9.6v10.5a1.4 1.4 0 0 1-1.4 1.4H2.3a1.4 1.4 0 0 1-1.4-1.4z" fill="#fff"/></svg>
<svg style="left:1481px;top:148.7px;" width="14" height="16" viewBox="0 0 14 16"><path d="M6.8 3.7A5.8 5.8 0 1 1 1.4 10.6" fill="none" stroke="#fff" stroke-width="1.9"/><path d="M7.8 0v7.4L3.2 3.7z" fill="#fff"/></svg>
<div class="a" style="left:698.6px;top:183.8px;width:815.3px;height:259.2px;overflow:hidden">
<div class="a" style="left:0.00px;top:0.00px;width:901.40px;height:37.80px;background:#3b3b3b"></div>
<div class="a" style="left:96.10px;top:0.00px;width:1.20px;height:37.80px;background:#737373"></div>
<div class="a" style="left:338.70px;top:0.00px;width:1.20px;height:37.80px;background:#737373"></div>
<div class="a" style="left:435.90px;top:0.00px;width:1.20px;height:37.80px;background:#737373"></div>
<div class="a" style="left:533.40px;top:0.00px;width:1.20px;height:37.80px;background:#737373"></div>
<div class="a" style="left:571.90px;top:0.00px;width:1.20px;height:37.80px;background:#737373"></div>
<div class="a" style="left:668.80px;top:0.00px;width:1.20px;height:37.80px;background:#737373"></div>
<div class="a" style="left:707.60px;top:0.00px;width:1.20px;height:37.80px;background:#737373"></div>
<div class="a" style="left:804.80px;top:0.00px;width:1.20px;height:37.80px;background:#737373"></div>
<div class="a" style="left:21.7px;top:11.20px;font-size:15.7px;line-height:15.7px;color:#fff;font-weight:bold;transform:scaleX(0.9524);transform-origin:0 0">Serial #</div>
<div class="a" style="left:190.6px;top:11.20px;font-size:15.12px;line-height:15.12px;color:#fff;font-weight:bold;transform:scaleX(0.9524);transform-origin:0 0">Product</div>
<div class="a" style="left:368.2px;top:11.20px;font-size:15.12px;line-height:15.12px;color:#fff;font-weight:bold;transform:scaleX(0.9524);transform-origin:0 0">Stock</div>
<div class="a" style="left:462.4px;top:11.20px;font-size:15.42px;line-height:15.42px;color:#fff;font-weight:bold;transform:scaleX(0.9524);transform-origin:0 0">Status</div>
<div class="a" style="left:590.7px;top:11.20px;font-size:15.04px;line-height:15.04px;color:#fff;font-weight:bold;transform:scaleX(0.9524);transform-origin:0 0">Scanned</div>
<div class="a" style="left:718.4px;top:11.20px;font-size:15.12px;line-height:15.12px;color:#fff;font-weight:bold;transform:scaleX(0.9524);transform-origin:0 0">Inventor...</div>
<div class="a" style="left:0.00px;top:37.80px;width:901.40px;height:36.90px;background:#d9ead3"></div>
<div class="a" style="left:96.20px;top:37.80px;width:1.00px;height:36.90px;background:rgba(0,0,0,0.07)"></div>
<div class="a" style="left:338.80px;top:37.80px;width:1.00px;height:36.90px;background:rgba(0,0,0,0.07)"></div>
<div class="a" style="left:436.00px;top:37.80px;width:1.00px;height:36.90px;background:rgba(0,0,0,0.07)"></div>
<div class="a" style="left:533.50px;top:37.80px;width:1.00px;height:36.90px;background:rgba(0,0,0,0.07)"></div>
<div class="a" style="left:572.00px;top:37.80px;width:1.00px;height:36.90px;background:rgba(0,0,0,0.07)"></div>
<div class="a" style="left:668.90px;top:37.80px;width:1.00px;height:36.90px;background:rgba(0,0,0,0.07)"></div>
<div class="a" style="left:707.70px;top:37.80px;width:1.00px;height:36.90px;background:rgba(0,0,0,0.07)"></div>
<div class="a" style="left:804.90px;top:37.80px;width:1.00px;height:36.90px;background:rgba(0,0,0,0.07)"></div>
<div class="a" style="left:5.4px;top:46.20px;font-size:15.93px;line-height:15.93px;color:#333;font-weight:normal;transform:scaleX(0.9524);transform-origin:0 0">A15-1386</div>
<div class="a" style="left:102.3px;top:46.20px;font-size:15.77px;line-height:15.77px;color:#333;font-weight:normal;transform:scaleX(0.9524);transform-origin:0 0">Rifle | RIP Tactical | AR15</div>
<div class="a" style="left:345.3px;top:46.20px;font-size:15.81px;line-height:15.81px;color:#333;font-weight:normal;transform:scaleX(0.9524);transform-origin:0 0">In Stock</div>
<div class="a" style="left:442.0px;top:46.20px;font-size:15.75px;line-height:15.75px;color:#333;font-weight:normal;transform:scaleX(0.9524);transform-origin:0 0">Scanned</div>
<div class="a" style="left:578.8px;top:46.20px;font-size:15.75px;line-height:15.75px;color:#333;font-weight:normal;transform:scaleX(0.9524);transform-origin:0 0">1</div>
<div class="a" style="left:537.60px;top:40.70px;width:30.70px;height:30.30px;background:#1abc9c;border-radius:3px"></div>
<div class="a" style="left:547.60px;top:54.90px;width:10.70px;height:2.20px;background:#fff"></div>
<div class="a" style="left:551.85px;top:50.70px;width:2.20px;height:10.60px;background:#fff"></div>
<div class="a" style="left:673.30px;top:40.70px;width:31.00px;height:30.30px;background:#c6c6c6;border-radius:3px"></div>
<div class="a" style="left:683.40px;top:54.80px;width:11.00px;height:2.40px;background:#1c1c1c"></div>
<div class="a" style="left:809.30px;top:40.70px;width:32.10px;height:30.30px;background:#ef5350;border-radius:3px"></div>
<div class="a" style="left:0.00px;top:74.70px;width:901.40px;height:36.90px;background:#ffffff"></div>
<div class="a" style="left:96.20px;top:74.70px;width:1.00px;height:36.90px;background:rgba(0,0,0,0.07)"></div>
<div class="a" style="left:338.80px;top:74.70px;width:1.00px;height:36.90px;background:rgba(0,0,0,0.07)"></div>
<div class="a" style="left:436.00px;top:74.70px;width:1.00px;height:36.90px;background:rgba(0,0,0,0.07)"></div>
<div class="a" style="left:533.50px;top:74.70px;width:1.00px;height:36.90px;background:rgba(0,0,0,0.07)"></div>
<div class="a" style="left:572.00px;top:74.70px;width:1.00px;height:36.90px;background:rgba(0,0,0,0.07)"></div>
<div class="a" style="left:668.90px;top:74.70px;width:1.00px;height:36.90px;background:rgba(0,0,0,0.07)"></div>
<div class="a" style="left:707.70px;top:74.70px;width:1.00px;height:36.90px;background:rgba(0,0,0,0.07)"></div>
<div class="a" style="left:804.90px;top:74.70px;width:1.00px;height:36.90px;background:rgba(0,0,0,0.07)"></div>
<div class="a" style="left:5.4px;top:83.20px;font-size:15.93px;line-height:15.93px;color:#333;font-weight:normal;transform:scaleX(0.9524);transform-origin:0 0">4461G199</div>
<div class="a" style="left:102.3px;top:83.20px;font-size:15.77px;line-height:15.77px;color:#333;font-weight:normal;transform:scaleX(0.9524);transform-origin:0 0">Rifle | Century Arms | AK-47</div>
<div class="a" style="left:345.3px;top:83.20px;font-size:15.81px;line-height:15.81px;color:#333;font-weight:normal;transform:scaleX(0.9524);transform-origin:0 0">In Stock</div>
<div class="a" style="left:442.0px;top:83.20px;font-size:15.75px;line-height:15.75px;color:#333;font-weight:normal;transform:scaleX(0.9524);transform-origin:0 0">Not Scann...</div>
<div class="a" style="left:578.8px;top:83.20px;font-size:15.75px;line-height:15.75px;color:#333;font-weight:normal;transform:scaleX(0.9524);transform-origin:0 0">0</div>
<div class="a" style="left:537.60px;top:77.60px;width:30.70px;height:30.30px;background:#1abc9c;border-radius:3px"></div>
<div class="a" style="left:547.60px;top:91.80px;width:10.70px;height:2.20px;background:#fff"></div>
<div class="a" style="left:551.85px;top:87.60px;width:2.20px;height:10.60px;background:#fff"></div>
<div class="a" style="left:673.30px;top:77.60px;width:31.00px;height:30.30px;background:#c6c6c6;border-radius:3px"></div>
<div class="a" style="left:683.40px;top:91.70px;width:11.00px;height:2.40px;background:#1c1c1c"></div>
<div class="a" style="left:809.30px;top:77.60px;width:32.10px;height:30.30px;background:#ef5350;border-radius:3px"></div>
<div class="a" style="left:0.00px;top:111.60px;width:901.40px;height:36.90px;background:#f5f5f5"></div>
<div class="a" style="left:96.20px;top:111.60px;width:1.00px;height:36.90px;background:rgba(0,0,0,0.07)"></div>
<div class="a" style="left:338.80px;top:111.60px;width:1.00px;height:36.90px;background:rgba(0,0,0,0.07)"></div>
<div class="a" style="left:436.00px;top:111.60px;width:1.00px;height:36.90px;background:rgba(0,0,0,0.07)"></div>
<div class="a" style="left:533.50px;top:111.60px;width:1.00px;height:36.90px;background:rgba(0,0,0,0.07)"></div>
<div class="a" style="left:572.00px;top:111.60px;width:1.00px;height:36.90px;background:rgba(0,0,0,0.07)"></div>
<div class="a" style="left:668.90px;top:111.60px;width:1.00px;height:36.90px;background:rgba(0,0,0,0.07)"></div>
<div class="a" style="left:707.70px;top:111.60px;width:1.00px;height:36.90px;background:rgba(0,0,0,0.07)"></div>
<div class="a" style="left:804.90px;top:111.60px;width:1.00px;height:36.90px;background:rgba(0,0,0,0.07)"></div>
<div class="a" style="left:5.4px;top:120.20px;font-size:15.93px;line-height:15.93px;color:#333;font-weight:normal;transform:scaleX(0.9524);transform-origin:0 0">4461G198</div>
<div class="a" style="left:102.3px;top:120.20px;font-size:15.77px;line-height:15.77px;color:#333;font-weight:normal;transform:scaleX(0.9524);transform-origin:0 0">Rifle | Century Arms | AK-47</div>
<div class="a" style="left:345.3px;top:120.20px;font-size:15.81px;line-height:15.81px;color:#333;font-weight:normal;transform:scaleX(0.9524);transform-origin:0 0">In Stock</div>
<div class="a" style="left:442.0px;top:120.20px;font-size:15.75px;line-height:15.75px;color:#333;font-weight:normal;transform:scaleX(0.9524);transform-origin:0 0">Not Scann...</div>
<div class="a" style="left:578.8px;top:120.20px;font-size:15.75px;line-height:15.75px;color:#333;font-weight:normal;transform:scaleX(0.9524);transform-origin:0 0">0</div>
<div class="a" style="left:537.60px;top:114.50px;width:30.70px;height:30.30px;background:#1abc9c;border-radius:3px"></div>
<div class="a" style="left:547.60px;top:128.70px;width:10.70px;height:2.20px;background:#fff"></div>
<div class="a" style="left:551.85px;top:124.50px;width:2.20px;height:10.60px;background:#fff"></div>
<div class="a" style="left:673.30px;top:114.50px;width:31.00px;height:30.30px;background:#c6c6c6;border-radius:3px"></div>
<div class="a" style="left:683.40px;top:128.60px;width:11.00px;height:2.40px;background:#1c1c1c"></div>
<div class="a" style="left:809.30px;top:114.50px;width:32.10px;height:30.30px;background:#ef5350;border-radius:3px"></div>
<div class="a" style="left:0.00px;top:148.50px;width:901.40px;height:36.90px;background:#fcf5e2"></div>
<div class="a" style="left:96.20px;top:148.50px;width:1.00px;height:36.90px;background:rgba(0,0,0,0.07)"></div>
<div class="a" style="left:338.80px;top:148.50px;width:1.00px;height:36.90px;background:rgba(0,0,0,0.07)"></div>
<div class="a" style="left:436.00px;top:148.50px;width:1.00px;height:36.90px;background:rgba(0,0,0,0.07)"></div>
<div class="a" style="left:533.50px;top:148.50px;width:1.00px;height:36.90px;background:rgba(0,0,0,0.07)"></div>
<div class="a" style="left:572.00px;top:148.50px;width:1.00px;height:36.90px;background:rgba(0,0,0,0.07)"></div>
<div class="a" style="left:668.90px;top:148.50px;width:1.00px;height:36.90px;background:rgba(0,0,0,0.07)"></div>
<div class="a" style="left:707.70px;top:148.50px;width:1.00px;height:36.90px;background:rgba(0,0,0,0.07)"></div>
<div class="a" style="left:804.90px;top:148.50px;width:1.00px;height:36.90px;background:rgba(0,0,0,0.07)"></div>
<div class="a" style="left:5.4px;top:157.20px;font-size:15.93px;line-height:15.93px;color:#333;font-weight:normal;transform:scaleX(0.9524);transform-origin:0 0">4461G197</div>
<div class="a" style="left:102.3px;top:157.20px;font-size:15.77px;line-height:15.77px;color:#333;font-weight:normal;transform:scaleX(0.9524);transform-origin:0 0">Rifle | Century Arms | AK-47</div>
<div class="a" style="left:345.3px;top:157.20px;font-size:15.81px;line-height:15.81px;color:#333;font-weight:normal;transform:scaleX(0.9524);transform-origin:0 0">In Stock</div>
<div class="a" style="left:442.0px;top:157.20px;font-size:15.75px;line-height:15.75px;color:#333;font-weight:normal;transform:scaleX(0.9524);transform-origin:0 0">Duplicate ...</div>
<div class="a" style="left:578.8px;top:157.20px;font-size:15.75px;line-height:15.75px;color:#333;font-weight:normal;transform:scaleX(0.9524);transform-origin:0 0">2</div>
<div class="a" style="left:537.60px;top:151.40px;width:30.70px;height:30.30px;background:#1abc9c;border-radius:3px"></div>
<div class="a" style="left:547.60px;top:165.60px;width:10.70px;height:2.20px;background:#fff"></div>
<div class="a" style="left:551.85px;top:161.40px;width:2.20px;height:10.60px;background:#fff"></div>
<div class="a" style="left:673.30px;top:151.40px;width:31.00px;height:30.30px;background:#c6c6c6;border-radius:3px"></div>
<div class="a" style="left:683.40px;top:165.50px;width:11.00px;height:2.40px;background:#1c1c1c"></div>
<div class="a" style="left:809.30px;top:151.40px;width:32.10px;height:30.30px;background:#ef5350;border-radius:3px"></div>
<div class="a" style="left:0.00px;top:185.40px;width:901.40px;height:36.90px;background:#f5f5f5"></div>
<div class="a" style="left:96.20px;top:185.40px;width:1.00px;height:36.90px;background:rgba(0,0,0,0.07)"></div>
<div class="a" style="left:338.80px;top:185.40px;width:1.00px;height:36.90px;background:rgba(0,0,0,0.07)"></div>
<div class="a" style="left:436.00px;top:185.40px;width:1.00px;height:36.90px;background:rgba(0,0,0,0.07)"></div>
<div class="a" style="left:533.50px;top:185.40px;width:1.00px;height:36.90px;background:rgba(0,0,0,0.07)"></div>
<div class="a" style="left:572.00px;top:185.40px;width:1.00px;height:36.90px;background:rgba(0,0,0,0.07)"></div>
<div class="a" style="left:668.90px;top:185.40px;width:1.00px;height:36.90px;background:rgba(0,0,0,0.07)"></div>
<div class="a" style="left:707.70px;top:185.40px;width:1.00px;height:36.90px;background:rgba(0,0,0,0.07)"></div>
<div class="a" style="left:804.90px;top:185.40px;width:1.00px;height:36.90px;background:rgba(0,0,0,0.07)"></div>
<div class="a" style="left:5.4px;top:194.20px;font-size:15.93px;line-height:15.93px;color:#333;font-weight:normal;transform:scaleX(0.9524);transform-origin:0 0">4461G195</div>
<div class="a" style="left:102.3px;top:194.20px;font-size:15.77px;line-height:15.77px;color:#333;font-weight:normal;transform:scaleX(0.9524);transform-origin:0 0">Rifle | Century Arms | AK-47</div>
<div class="a" style="left:345.3px;top:194.20px;font-size:15.81px;line-height:15.81px;color:#333;font-weight:normal;transform:scaleX(0.9524);transform-origin:0 0">In Stock</div>
<div class="a" style="left:442.0px;top:194.20px;font-size:15.75px;line-height:15.75px;color:#333;font-weight:normal;transform:scaleX(0.9524);transform-origin:0 0">Not Scann...</div>
<div class="a" style="left:578.8px;top:194.20px;font-size:15.75px;line-height:15.75px;color:#333;font-weight:normal;transform:scaleX(0.9524);transform-origin:0 0">0</div>
<div class="a" style="left:537.60px;top:188.30px;width:30.70px;height:30.30px;background:#1abc9c;border-radius:3px"></div>
<div class="a" style="left:547.60px;top:202.50px;width:10.70px;height:2.20px;background:#fff"></div>
<div class="a" style="left:551.85px;top:198.30px;width:2.20px;height:10.60px;background:#fff"></div>
<div class="a" style="left:673.30px;top:188.30px;width:31.00px;height:30.30px;background:#c6c6c6;border-radius:3px"></div>
<div class="a" style="left:683.40px;top:202.40px;width:11.00px;height:2.40px;background:#1c1c1c"></div>
<div class="a" style="left:809.30px;top:188.30px;width:32.10px;height:30.30px;background:#ef5350;border-radius:3px"></div>
<div class="a" style="left:0.00px;top:222.30px;width:901.40px;height:36.90px;background:#ffffff"></div>
<div class="a" style="left:96.20px;top:222.30px;width:1.00px;height:36.90px;background:rgba(0,0,0,0.07)"></div>
<div class="a" style="left:338.80px;top:222.30px;width:1.00px;height:36.90px;background:rgba(0,0,0,0.07)"></div>
<div class="a" style="left:436.00px;top:222.30px;width:1.00px;height:36.90px;background:rgba(0,0,0,0.07)"></div>
<div class="a" style="left:533.50px;top:222.30px;width:1.00px;height:36.90px;background:rgba(0,0,0,0.07)"></div>
<div class="a" style="left:572.00px;top:222.30px;width:1.00px;height:36.90px;background:rgba(0,0,0,0.07)"></div>
<div class="a" style="left:668.90px;top:222.30px;width:1.00px;height:36.90px;background:rgba(0,0,0,0.07)"></div>
<div class="a" style="left:707.70px;top:222.30px;width:1.00px;height:36.90px;background:rgba(0,0,0,0.07)"></div>
<div class="a" style="left:804.90px;top:222.30px;width:1.00px;height:36.90px;background:rgba(0,0,0,0.07)"></div>
<div class="a" style="left:5.4px;top:231.20px;font-size:15.93px;line-height:15.93px;color:#333;font-weight:normal;transform:scaleX(0.9524);transform-origin:0 0">4461G193</div>
<div class="a" style="left:102.3px;top:231.20px;font-size:15.77px;line-height:15.77px;color:#333;font-weight:normal;transform:scaleX(0.9524);transform-origin:0 0">Rifle | Century Arms | AK-47</div>
<div class="a" style="left:345.3px;top:231.20px;font-size:15.81px;line-height:15.81px;color:#333;font-weight:normal;transform:scaleX(0.9524);transform-origin:0 0">In Stock</div>
<div class="a" style="left:442.0px;top:231.20px;font-size:15.75px;line-height:15.75px;color:#333;font-weight:normal;transform:scaleX(0.9524);transform-origin:0 0">Not Scann...</div>
<div class="a" style="left:578.8px;top:231.20px;font-size:15.75px;line-height:15.75px;color:#333;font-weight:normal;transform:scaleX(0.9524);transform-origin:0 0">0</div>
<div class="a" style="left:537.60px;top:225.20px;width:30.70px;height:30.30px;background:#1abc9c;border-radius:3px"></div>
<div class="a" style="left:547.60px;top:239.40px;width:10.70px;height:2.20px;background:#fff"></div>
<div class="a" style="left:551.85px;top:235.20px;width:2.20px;height:10.60px;background:#fff"></div>
<div class="a" style="left:673.30px;top:225.20px;width:31.00px;height:30.30px;background:#c6c6c6;border-radius:3px"></div>
<div class="a" style="left:683.40px;top:239.30px;width:11.00px;height:2.40px;background:#1c1c1c"></div>
<div class="a" style="left:809.30px;top:225.20px;width:32.10px;height:30.30px;background:#ef5350;border-radius:3px"></div>
</div>
<div class="a" style="left:698.6px;top:221.6px;width:1.00px;height:221.40px;background:#e6e6e6"></div>
<div class="a" style="left:698.6px;top:442.2px;width:787.40px;height:15.60px;background:#a9a9a9;border-radius:8px"></div>
<div class="a" style="left:698.6px;top:457.8px;width:815.80px;height:47.20px;border:1px solid #ececec;border-top:none;box-shadow:0 1px 2px rgba(0,0,0,0.06)"></div>
<div class="a" style="left:702.3px;top:463.2px;width:230.40px;height:37.30px;background:#eeeeee;border-radius:3px"></div>
<div class="a" style="left:787.4px;top:473px;font-size:16.03px;line-height:16.03px;color:#adadad;font-weight:normal;transform:scaleX(0.9524);transform-origin:0 0;">Previous</div>
<div class="a" style="left:954.2px;top:474px;font-size:15.19px;line-height:15.19px;color:#333;font-weight:normal;transform:scaleX(0.9524);transform-origin:0 0;">Page</div>
<div class="a" style="left:992.3px;top:466.1px;width:68.20px;height:31.50px;border:1px solid #e3e3e3;border-radius:4px;background:#fff"></div>
<div class="a" style="left:1015.2px;top:474px;font-size:15.96px;line-height:15.96px;color:#333;font-weight:normal;transform:scaleX(0.9524);transform-origin:0 0;">1</div>
<div class="a" style="left:1064.5px;top:474px;font-size:16.58px;line-height:16.58px;color:#333;font-weight:normal;transform:scaleX(0.9524);transform-origin:0 0;">of 492</div>
<div class="a" style="left:1150.2px;top:466.2px;width:108.20px;height:31.30px;border:1px solid #e3e3e3;border-radius:3px;background:#fff"></div>
<div class="a" style="left:1161.9px;top:473px;font-size:16.18px;line-height:16.18px;color:#333;font-weight:normal;transform:scaleX(0.9524);transform-origin:0 0;">5 rows</div>
<svg style="left:1245.3px;top:479px;" width="9.4" height="6" viewBox="0 0 9.4 6"><path d="M0.9 0.9L4.7 4.8 8.5 0.9" fill="none" stroke="#222" stroke-width="1.8"/></svg>
<div class="a" style="left:1279.7px;top:463.4px;width:231.00px;height:37.50px;background:#e4e4e4;border-radius:3px"></div>
<div class="a" style="left:1380.2px;top:474px;font-size:15.93px;line-height:15.93px;color:#808080;font-weight:normal;transform:scaleX(0.9524);transform-origin:0 0;">Next</div>
</body></html>
